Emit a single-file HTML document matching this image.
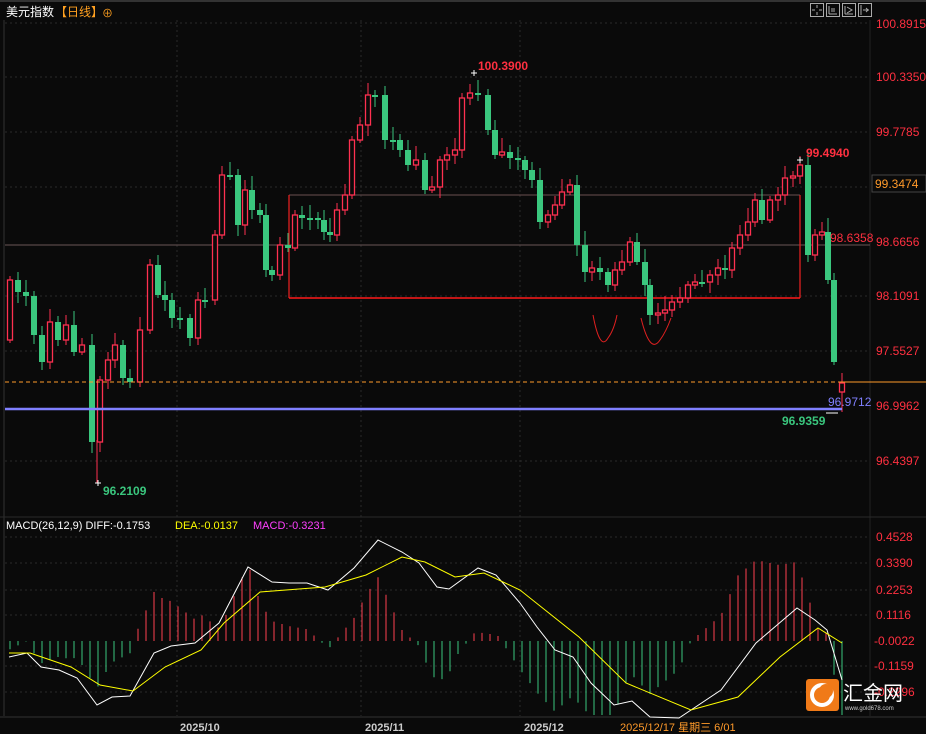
<!DOCTYPE html>
<html><head><meta charset="utf-8">
<style>
html,body{margin:0;padding:0;background:#0a0a0a;width:926px;height:734px;overflow:hidden}
svg{display:block}
text{font-family:"Liberation Sans","Noto Sans CJK SC",sans-serif}
</style></head><body>
<svg id="s" width="926" height="734" xmlns="http://www.w3.org/2000/svg">
<rect width="926" height="734" fill="#0a0a0a"/>
<line x1="0" y1="1" x2="926" y2="1" stroke="#333" stroke-width="2"/>
<line x1="4" y1="20" x2="4" y2="716" stroke="#333"/>
<line x1="870" y1="20" x2="870" y2="716" stroke="#222"/>
<g stroke="#2a2a2a" stroke-dasharray="2,3">
<line x1="5" y1="23" x2="868" y2="23"/><line x1="5" y1="77" x2="868" y2="77"/><line x1="5" y1="132" x2="868" y2="132"/>
<line x1="5" y1="187" x2="868" y2="187"/><line x1="5" y1="296" x2="868" y2="296"/><line x1="5" y1="351" x2="868" y2="351"/>
<line x1="5" y1="461" x2="868" y2="461"/>
<line x1="5" y1="537" x2="868" y2="537"/><line x1="5" y1="563" x2="868" y2="563"/><line x1="5" y1="590" x2="868" y2="590"/>
<line x1="5" y1="615" x2="868" y2="615"/><line x1="5" y1="666" x2="868" y2="666"/><line x1="5" y1="692" x2="868" y2="692"/>
<line x1="177" y1="20" x2="177" y2="716"/><line x1="361" y1="20" x2="361" y2="716"/><line x1="520" y1="20" x2="520" y2="716"/>
</g>
<line x1="0" y1="517" x2="926" y2="517" stroke="#2a2a2a"/>
<line x1="0" y1="717" x2="926" y2="717" stroke="#333"/>
<line x1="5" y1="245" x2="870" y2="245" stroke="#6a5555"/>
<line x1="289" y1="195" x2="800" y2="195" stroke="#6a5050"/>
<line x1="289" y1="195" x2="289" y2="298" stroke="#e02020" stroke-width="1.3"/>
<line x1="800" y1="195" x2="800" y2="298" stroke="#e02020" stroke-width="1.3"/>
<line x1="289" y1="298" x2="800" y2="298" stroke="#ff1a1a" stroke-width="1.5"/>
<path d="M593 315 Q600 352 608 338 Q614 330 617 315" fill="none" stroke="#e02020"/>
<path d="M641 318 Q650 355 660 340 Q666 332 671 318" fill="none" stroke="#e02020"/>
<g id="candles"></g>
<g id="macd"></g>
<line x1="5" y1="382" x2="842" y2="382" stroke="#ff9a2a" stroke-dasharray="4,3"/>
<line x1="842" y1="382" x2="926" y2="382" stroke="#ff9a2a"/>
<line x1="5" y1="409" x2="842" y2="409" stroke="#8080ff" stroke-width="2.5"/>
<line x1="826" y1="413" x2="838" y2="413" stroke="#fff"/>
<path d="M95 483h6M98 480v6M471 73h6M474 70v6M797 160h6M800 157v6" stroke="#fff"/>
<g font-size="12" fill="#ff3040" font-weight="bold">
<text x="478" y="70">100.3900</text><text x="806" y="157">99.4940</text><text x="830" y="242" font-weight="normal">98.6358</text>
</g>
<text x="103" y="495" font-size="12" fill="#3ac77e" font-weight="bold">96.2109</text>
<text x="782" y="425" font-size="12" fill="#3ac77e" font-weight="bold">96.9359</text>
<text x="828" y="406" font-size="12" fill="#8080ff">96.9712</text>
<g font-size="12" fill="#ff3040">
<text x="876" y="28">100.8915</text><text x="876" y="81">100.3350</text><text x="876" y="136">99.7785</text>
<text x="876" y="246">98.6656</text><text x="876" y="300">98.1091</text><text x="876" y="355">97.5527</text>
<text x="876" y="410">96.9962</text><text x="876" y="465">96.4397</text>
<text x="876" y="541">0.4528</text><text x="876" y="567">0.3390</text><text x="876" y="594">0.2253</text>
<text x="876" y="619">0.1116</text><text x="874" y="645">-0.0022</text><text x="874" y="670">-0.1159</text><text x="874" y="696">-0.2296</text>
</g>
<rect x="872" y="175" width="54" height="17" fill="#0a0a0a" stroke="#444"/>
<text x="875" y="188" font-size="12" fill="#ff9a2a">99.3474</text>
<text x="6" y="16" font-size="12" fill="#fff">美元指数</text>
<text x="55" y="16" font-size="12" fill="#ffa020">【日线】</text>
<text x="102" y="17" font-size="11" fill="#ffa020">⊕</text>
<g fill="none" stroke="#aaa">
<rect x="810.5" y="3.5" width="13" height="13"/><rect x="826.5" y="3.5" width="13" height="13"/>
<rect x="842.5" y="3.5" width="13" height="13"/><rect x="858.5" y="3.5" width="13" height="13"/>
<path d="M817 5v3M817 12v3M812 10h3M819 10h3M829 6v8M829 14h8M832 8v4M834 8v4M845 6v8M845 14h8M847 7l5 3-5 3M861 5v10M863 10h6M866 8l2 2-2 2"/>
</g>
<text x="6" y="529" font-size="11" fill="#fff">MACD(26,12,9) DIFF:-0.1753</text>
<text x="175" y="529" font-size="11" fill="#ffff00">DEA:-0.0137</text>
<text x="253" y="529" font-size="11" fill="#ff40ff">MACD:-0.3231</text>
<g font-size="11" fill="#ccc" font-weight="bold">
<text x="180" y="731">2025/10</text><text x="365" y="731">2025/11</text><text x="524" y="731">2025/12</text>
</g>
<text x="620" y="731" font-size="11" fill="#ff9a2a">2025/12/17 星期三 6/01</text>
<rect x="806" y="679" width="33" height="32" rx="3" fill="#f07a18"/>
<circle cx="822" cy="695" r="10" fill="none" stroke="#fff" stroke-width="4"/>
<circle cx="826" cy="691" r="7" fill="#f07a18"/>
<text x="843" y="700" font-size="20" fill="#fff" font-family="Noto Sans CJK SC,sans-serif">汇金网</text>
<text x="845" y="710" font-size="6" fill="#ccc">www.gold678.com</text>
</svg>
<script>
(function(){
var NS="http://www.w3.org/2000/svg";
function el(p,n,a){var e=document.createElementNS(NS,n);for(var k in a)e.setAttribute(k,a[k]);p.appendChild(e);return e;}
var kp=[[10,280],[18,292],[26,296],[34,335],[42,362],[50,322],[58,340],[66,325],[74,352],[82,345],[92,442],[100,380],[108,360],[115,345],[123,378],[130,382],[140,330],[150,265],[158,295],[165,300],[172,318],[180,318],[190,338],[198,300],[205,300],[215,235],[222,175],[230,175],[238,225],[245,190],[252,210],[260,215],[266,270],[272,275],[280,245],[288,248],[295,215],[302,218],[310,218],[318,220],[324,232],[330,235],[337,210],[345,195],[352,140],[360,125],[368,95],[375,95],[385,140],[393,140],[400,150],[408,165],[416,160],[425,190],[432,187],[440,160],[447,155],[455,150],[462,98],[470,93],[478,95],[488,130],[495,155],[502,152],[510,158],[518,160],[525,170],[532,180],[540,222],[548,215],[555,205],[562,192],[570,185],[577,245],[585,272],[592,268],[600,272],[608,285],[615,270],[622,262],[630,242],[637,262],[645,285],[650,315],[658,313],[665,310],[672,302],[680,298],[688,285],[695,282],[702,282],[710,275],[718,268],[725,270],[732,248],[740,235],[748,222],[755,200],[762,220],[770,200],[778,195],[785,178],[793,176],[800,165],[808,255],[815,235],[822,232],[828,280],[834,362]];
var g=document.getElementById("candles");
for(var i=0;i<kp.length;i++){
 var x=kp[i][0],c=kp[i][1],o=i?kp[i-1][1]:340;
 var top=Math.min(o,c),bot=Math.max(o,c);if(bot-top<2)bot=top+2;
 var n=((i*37)%11),hi=top-4-n,lo=bot+3+((i*53)%9);
 var up=c<o;
 var col=up?"#ff3050":"#3ac77e";
 el(g,"line",{x1:x,y1:hi,x2:x,y2:lo,stroke:col});
 if(up)el(g,"rect",{x:x-2.5,y:top,width:5,height:bot-top,fill:"#0a0a0a",stroke:col,"stroke-width":1.3});
 else el(g,"rect",{x:x-3,y:top,width:6,height:bot-top,fill:col});
}
el(g,"line",{x1:97,y1:440,x2:97,y2:483,stroke:"#ff3050"});
el(g,"line",{x1:842,y1:373,x2:842,y2:412,stroke:"#ff3050"});
el(g,"rect",{x:839.5,y:383,width:5,height:9,fill:"#0a0a0a",stroke:"#ff3050","stroke-width":1.3});
var diff=[[9,657],[27,653],[41,667],[59,670],[77,678],[97,705],[112,697],[130,696],[154,653],[171,646],[195,643],[219,623],[248,567],[272,582],[289,583],[307,583],[328,590],[354,568],[378,540],[402,552],[419,563],[437,587],[449,589],[478,568],[496,575],[520,603],[537,627],[555,650],[573,657],[591,683],[614,705],[632,701],[650,717],[679,718],[721,690],[756,643],[797,608],[815,620],[827,630],[842,680]];
var dea=[[9,653],[30,653],[71,667],[100,685],[133,691],[165,667],[201,650],[224,623],[260,592],[325,587],[366,575],[402,557],[425,562],[455,577],[484,573],[520,590],[579,637],[626,683],[691,710],[738,697],[780,657],[818,628],[842,643]];
function at(a,x){for(var i=1;i<a.length;i++)if(x<=a[i][0]){var t=(x-a[i-1][0])/(a[i][0]-a[i-1][0]);return a[i-1][1]+t*(a[i][1]-a[i-1][1]);}return a[a.length-1][1];}
var m=document.getElementById("macd");
for(var x=10;x<=842;x+=8){
 var d=(at(dea,x)-at(diff,x))*2.2;
 var y2=641-d;y2=Math.max(545,Math.min(715,y2));
 el(m,"line",{x1:x,y1:641,x2:x,y2:y2,stroke:d>0?"#ff4050":"#3ac77e"});
}
function pl(a,c){el(m,"polyline",{points:a.map(function(p){return p.join(",")}).join(" "),fill:"none",stroke:c,"stroke-width":1});}
pl(diff,"#ffffff");pl(dea,"#ffff00");
})();
</script>
</body></html>
